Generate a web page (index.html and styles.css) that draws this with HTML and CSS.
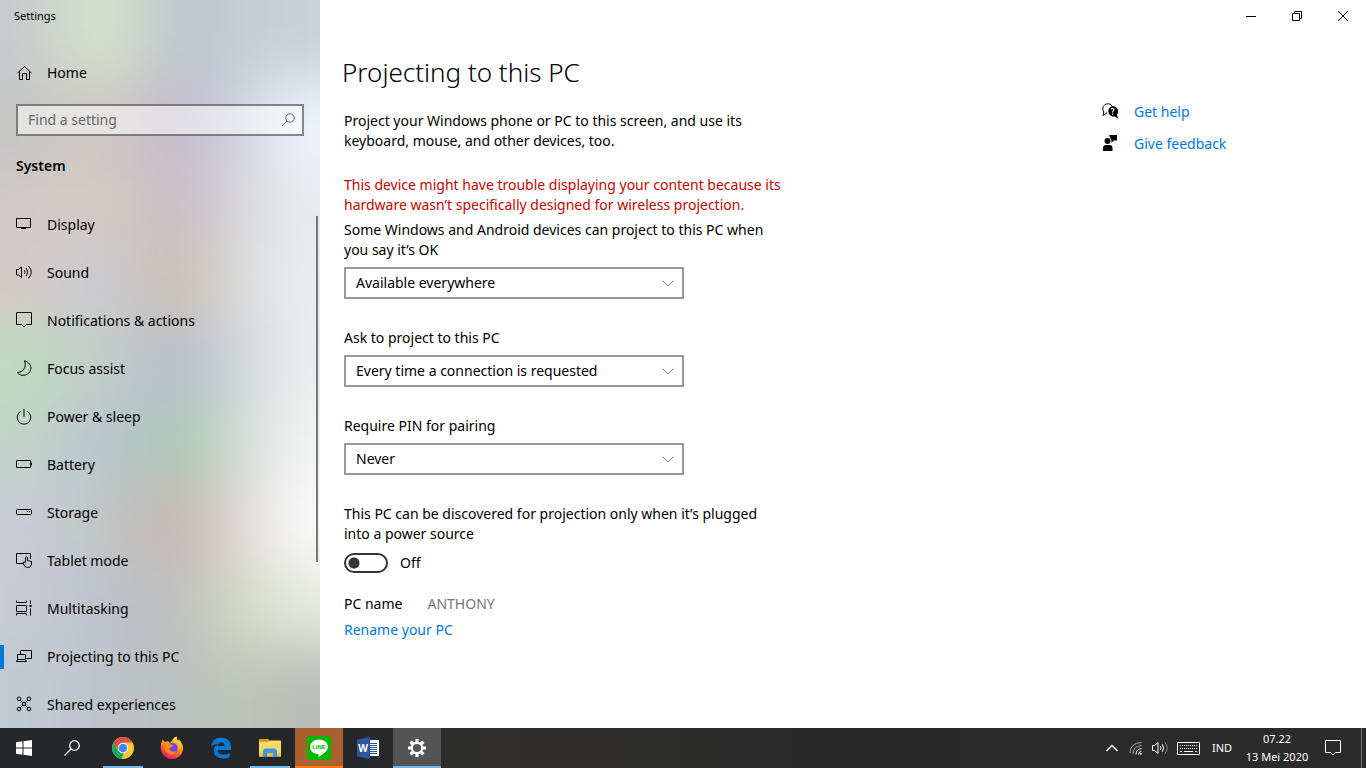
FILE: index.html
```html
<!DOCTYPE html>
<html lang="en">
<head>
<meta charset="utf-8">
<title>Settings</title>
<meta name="viewport" content="width=device-width, initial-scale=1">
<link rel="stylesheet" href="styles.css">
</head>
<body>
<div class="window">
  <aside class="sidebar">
    <div class="acrylic" aria-hidden="true">
      <div class="band band-1"></div>
      <div class="band band-2"></div>
      <div class="band band-3"></div>
      <div class="band band-4"></div>
      <div class="band band-5"></div>
      <div class="band band-6"></div>
      <div class="band band-7"></div>
      <div class="band band-8"></div>
      <div class="band band-9"></div>
    </div>
    <div class="app-title">Settings</div>
    <a class="nav-link home" href="#">
      <svg class="icon" viewBox="0 0 16 16"><path d="M1.500 8 8.500 1.500 15.500 8M3.500 6.500V14.500H6.500V8.500H10.500V14.500H13.500V6.500"/></svg>
      <span>Home</span>
    </a>
    <form class="search">
      <input class="search-input" type="text" placeholder="Find a setting" aria-label="Find a setting">
      <button class="search-button" type="button" aria-label="Search">
        <svg class="icon" viewBox="0 0 16 16"><circle cx="10" cy="6" r="4.200"/><path d="M7 9 2 14"/></svg>
      </button>
    </form>
    <h2 class="section-title">System</h2>
    <nav class="nav">
      <a class="nav-link" href="#"><svg class="icon" viewBox="0 0 16 16"><path d="M.5 1.500H14.500V10.500H.5ZM7.500 10.500V12M5 11.500H10"/></svg><span>Display</span></a>
      <a class="nav-link" href="#"><svg class="icon" viewBox="0 0 16 16"><path d="M.5 4.500H2.500L5.500 2V12.500L2.500 10H.5ZM8.300 5.200Q9.600 7.200 8.300 9.200M10.300 3.200Q13 7.200 10.300 11.200M12.500 1Q18 7.200 12.500 13.400"/></svg><span>Sound</span></a>
      <a class="nav-link" href="#"><svg class="icon raised" viewBox="0 0 16 16"><path d="M.5.5H15.500V12.500H10.500L8 15 5.500 12.500H.5Z"/></svg><span>Notifications &amp; actions</span></a>
      <a class="nav-link" href="#"><svg class="icon raised" viewBox="0 0 16 16"><path d="M8.500.8C13 2 15.500 5.500 14.800 9.200 13.500 15.700 5 17.500 1 12.300 7 12.800 11 7 8.500.8Z"/></svg><span>Focus assist</span></a>
      <a class="nav-link" href="#"><svg class="icon" viewBox="0 0 16 16"><path d="M8 0V8M4.800 2.400A6.800 6.800 0 1 0 11.200 2.400"/></svg><span>Power &amp; sleep</span></a>
      <a class="nav-link" href="#"><svg class="icon raised" viewBox="0 0 16 16"><path d="M.5 4.500H14.500V11.500H.5ZM15.500 6.500V9.500"/></svg><span>Battery</span></a>
      <a class="nav-link" href="#"><svg class="icon raised" viewBox="0 0 16 16"><rect x=".5" y="5.500" width="15" height="5" rx=".7"/><path d="M11 7.500H12M13 7.500H14"/></svg><span>Storage</span></a>
      <a class="nav-link" href="#"><svg class="icon raised" viewBox="0 0 16 16"><path d="M7 11.500H.5V1.500H14.500V7M9.500 10.500V5.500Q10.500 4 11.500 5.500V8.500L15.500 9.500V12.500Q15 15.500 11.500 15.500 9 15.500 8 13L7 10.500Q8 9 9.500 11"/></svg><span>Tablet mode</span></a>
      <a class="nav-link" href="#"><svg class="icon raised" viewBox="0 0 16 16"><path d="M.500.500V2.500H10.500V.500M.500 5.500H10.500V11.500H.500ZM.500 15.500V13.500H10.500V15.500M14.500.500V4M14.500 8.500V15.500"/><path d="M13.500 6H15.500" stroke-width="2"/></svg><span>Multitasking</span></a>
      <a class="nav-link current" href="#" aria-current="page"><svg class="icon raised" viewBox="0 0 16 16"><path d="M4.500 6V2.500H15.500V10.500H10.500M1.500 11.500V6.500H9.500V11.500M.5 13.500 1.500 11.500H9.500L10.500 13.500Z"/></svg><span>Projecting to this PC</span></a>
      <a class="nav-link" href="#"><svg class="icon raised" viewBox="0 0 16 16"><circle cx="3" cy="2.800" r="1.800"/><circle cx="13" cy="2.800" r="1.800"/><circle cx="3" cy="13" r="1.800"/><circle cx="13" cy="13" r="1.800"/><path d="M4.300 4.100 6.500 6.500M11.700 4.100 9.500 6.500M4.300 11.700 6.500 9.500M11.700 11.700 9.500 9.500M6.500 6.500H9.500V9.500H6.500Z"/></svg><span>Shared experiences</span></a>
    </nav>
    <div class="scroll-thumb"></div>
  </aside>

  <div class="pane">
    <div class="caption-bar">
      <button class="caption" type="button" aria-label="Minimize"><svg viewBox="0 0 10 10"><path d="M0 5.500H10"/></svg></button>
      <button class="caption" type="button" aria-label="Restore"><svg viewBox="0 0 10 10"><path d="M.5 2.500H7.500V9.500H.5ZM2.500 2.500V.5H9.500V7.500H7.500"/></svg></button>
      <button class="caption" type="button" aria-label="Close"><svg viewBox="0 0 10 10"><path d="M0 0 10 10M10 0 0 10"/></svg></button>
    </div>
    <div class="columns">
      <main class="content">
        <h1 class="page-title">Projecting to this PC</h1>
        <p class="intro">Project your Windows phone or PC to this screen, and use its<br>keyboard, mouse, and other devices, too.</p>
        <p class="warning">This device might have trouble displaying your content because its<br>hardware wasn’t specifically designed for wireless projection.</p>
        <div class="field">
          <label for="availability">Some Windows and Android devices can project to this PC when<br>you say it’s OK</label>
          <div class="combo">
            <select id="availability"><option>Available everywhere</option></select>
            <svg class="chevron" viewBox="0 0 12 7"><path d="M.5.500 6 6 11.500.500"/></svg>
          </div>
        </div>
        <div class="field">
          <label for="ask">Ask to project to this PC</label>
          <div class="combo">
            <select id="ask"><option>Every time a connection is requested</option></select>
            <svg class="chevron" viewBox="0 0 12 7"><path d="M.5.500 6 6 11.500.500"/></svg>
          </div>
        </div>
        <div class="field">
          <label for="pin">Require PIN for pairing</label>
          <div class="combo">
            <select id="pin"><option>Never</option></select>
            <svg class="chevron" viewBox="0 0 12 7"><path d="M.5.500 6 6 11.500.500"/></svg>
          </div>
        </div>
        <div class="power">
          <label for="plugged">This PC can be discovered for projection only when it’s plugged<br>into a power source</label>
          <div class="switch-row">
            <input class="switch" id="plugged" type="checkbox" role="switch">
            <span>Off</span>
          </div>
        </div>
        <dl class="device"><dt>PC name</dt><dd>ANTHONY</dd></dl>
        <a class="link" href="#">Rename your PC</a>
      </main>
      <aside class="help">
        <a class="link help-link" href="#"><svg class="help-icon" viewBox="0 0 16 16"><path d="M5 9.800 1 12.500 1.800 9A5 5 0 1 1 10 2.800" fill="none" stroke="#000"/><path d="M10.500 3A5.300 5.300 0 1 0 12.700 13.400L16 15.500 15 11.500A5.300 5.300 0 0 0 10.500 3Z"/><path d="M9 6.500Q9.500 5.300 10.700 5.500 12.700 6 11.500 7.600 10.600 8.300 10.600 9.500M10.600 10.600V11.800" fill="none" stroke="#fff" stroke-width="1.200"/></svg><span>Get help</span></a>
        <a class="link help-link" href="#"><svg class="help-icon" viewBox="0 0 16 16"><circle cx="5.500" cy="6" r="3"/><path d="M1 16V13Q1 10 4 10H7.500Q10.500 10 10.500 13V16ZM7 0H15V5.500H12L9.500 7.700V5.500Z"/></svg><span>Give feedback</span></a>
      </aside>
    </div>
  </div>
</div>

<footer class="taskbar">
  <div class="launch">
    <button class="task" type="button" aria-label="Start"><svg width="16" height="16" viewBox="0 0 16 16" fill="#fff"><path d="M0 2.200 6.500 1.300V7.500H0ZM7.500 1.200 16 0V7.500H7.500ZM0 8.500H6.500V14.700L0 13.800ZM7.500 8.500H16V16L7.500 14.800Z"/></svg></button>
    <button class="task" type="button" aria-label="Search"><svg width="16" height="16" viewBox="0 0 16 16" fill="none" stroke="#fff" stroke-width="1.300"><circle cx="10.500" cy="5.500" r="4.800"/><path d="M7 9 .5 15.500"/></svg></button>
  </div>
  <div class="apps">
    <button class="task running" type="button" aria-label="Chrome">
      <svg width="22" height="22" viewBox="0 0 22 22"><circle cx="11" cy="11" r="11" fill="#fcc934"/><path d="M1.500 5.500A11 11 0 0 1 20.500 5.500H11L6.200 13.800Z" fill="#d94f43"/><path d="M1.500 5.500 6.200 13.700Q8.500 16.500 12 16L9.500 21.900A11 11 0 0 1 1.500 5.500Z" fill="#1da462"/><circle cx="11" cy="11" r="5.300" fill="#fff"/><circle cx="11" cy="11" r="4.300" fill="#4688f1"/></svg>
    </button>
    <button class="task" type="button" aria-label="Firefox">
      <svg width="24" height="24" viewBox="0 0 24 24"><defs><linearGradient id="fire" x1=".8" y1="0" x2=".3" y2="1"><stop offset="0" stop-color="#fff44f"/><stop offset=".45" stop-color="#ff980e"/><stop offset=".8" stop-color="#ff3750"/><stop offset="1" stop-color="#e31587"/></linearGradient></defs><path d="M2.500 3.500 5 6 8 5 10 7 12.500 4 14 1.500 17 .5Q16 3 18 4.500L19 3.500Q24 9 23 14A11.200 11.200 0 0 1 1 14Q0 9 2.500 3.500Z" fill="url(#fire)"/><circle cx="12.500" cy="12" r="5.300" fill="#7542e5"/><path d="M4 9Q8 5.500 11 8.500L13.500 9.500 10.500 11.500Q8.500 12.500 10.500 15 13 16.500 16 15 12 21 7 17 4 14 4 9Z" fill="#ff8a16"/><path d="M14.500 6Q19.500 8.500 17.500 14 22 10 18 5L16.500 2Z" fill="#ffbd2e"/></svg>
    </button>
    <button class="task" type="button" aria-label="Edge">
      <svg width="20" height="22" viewBox="0 0 20 22"><path d="M0 9.600Q1.500.600 10.500.600 19.800 1 20 10V13H6.500Q7 17.500 12.500 17.700 16 17.600 18.700 16V20Q15.500 21.700 12 21.600 2.500 21 2.800 13 3.100 9 7.500 6.800 3 7 0 9.600ZM6.500 9H13.700Q13.500 5.600 10.300 5.600 7.200 6 6.500 9Z" fill="#0078d7" fill-rule="evenodd"/></svg>
    </button>
    <button class="task running" type="button" aria-label="File Explorer">
      <svg width="22" height="18" viewBox="0 0 22 18"><path d="M0 0H9L10 1.500H22V17.500H0Z" fill="#ffd76a"/><path d="M0 0H9L10 1.500 9 3H0Z" fill="#dc9a19"/><path d="M0 14H22V17.500H0Z" fill="#f6bd45"/><path d="M4 18V11L6 9.500H16L18 11V18H14V14H8V18Z" fill="#3b9ade"/></svg>
    </button>
    <button class="task attention" type="button" aria-label="LINE">
      <svg width="24" height="24" viewBox="0 0 24 24"><rect width="24" height="24" rx="3" fill="#00b900"/><path d="M12 3.500C17 3.500 21 6.800 21 11 21 15 15 19 11.500 21V18.200C6.500 18 3 15 3 11 3 6.800 7 3.500 12 3.500Z" fill="#fff"/><text class="line-mark" x="12" y="13">LINE</text></svg>
    </button>
    <button class="task" type="button" aria-label="Word">
      <svg width="22" height="22" viewBox="0 0 22 22"><path d="M11 3H22V19H11Z" fill="#fff"/><path d="M13 6.500H20M13 8.500H20M13 10.500H20M13 12.500H20M13 14.500H20M13 16.500H20" stroke="#2b579a"/><path d="M0 2.500 13 0V22L0 19.500Z" fill="#2b579a"/><text class="word-mark" x="6" y="15">W</text></svg>
    </button>
    <button class="task running active" type="button" aria-label="Settings">
      <svg width="18" height="18" viewBox="0 0 18 18" fill="none" stroke="#fff"><circle cx="9" cy="9" r="5.200" stroke-width="2.200"/><path d="M9 0V3.500M9 14.500V18M0 9H3.500M14.500 9H18M2.600 2.600 5 5M13 13 15.400 15.400M2.600 15.400 5 13M13 5 15.400 2.600" stroke-width="3.200"/></svg>
    </button>
  </div>
  <div class="tray">
    <button class="tray-item" type="button" aria-label="Show hidden icons"><svg width="12" height="8" viewBox="0 0 12 8"><path d="M.5 7 6 1.500 11.500 7" stroke-width="1.400"/></svg></button>
    <button class="tray-item" type="button" aria-label="Network"><svg width="14" height="14" viewBox="0 0 14 14"><g stroke="#aaa"><path d="M1 12Q1 2 12.500 1.500M4 13Q4 5 12.500 4.500"/></g><path d="M7 13.500Q7 8 12.500 7.500M9.500 13.500Q10 10.500 12.500 10.200"/><circle cx="11.800" cy="12.800" r=".6"/></svg></button>
    <button class="tray-item" type="button" aria-label="Volume"><svg width="16" height="14" viewBox="0 0 16 14"><path d="M.5 4.500H2.500L6 1.500V12.500L2.500 9.500H.5ZM8.300 5Q9.600 7 8.300 9M10.300 3.200Q13 7 10.300 10.800"/><path d="M12.500 1Q18 7 12.500 13" stroke="#888"/></svg></button>
    <button class="tray-item keyboard" type="button" aria-label="Touch keyboard"><svg width="23" height="13" viewBox="0 0 23 13"><path d="M.5.500H22.500V12.500H.500Z"/><path d="M3 3.500H21M3 6.500H21" stroke-dasharray="1 1"/><path d="M3 9.500H5M7 9.500H16M18 9.500H20"/></svg></button>
    <button class="tray-item lang" type="button">IND</button>
    <button class="tray-item clock" type="button"><span>07.22</span><span>13 Mei 2020</span></button>
    <button class="tray-item action" type="button" aria-label="Action center"><svg width="16" height="16" viewBox="0 0 16 16"><path d="M.5.500H15.500V12.500H10.500L8 15 5.500 12.500H.5Z"/></svg></button>
    <button class="show-desktop" type="button" aria-label="Show desktop"></button>
  </div>
</footer>
</body>
</html>
```
FILE: styles.css
```css
* { box-sizing: border-box; }

body {
  margin: 0;
  height: 100vh;
  display: flex;
  flex-direction: column;
  overflow: hidden;
  background: #fff;
  color: #000;
  font: 14px/20px "Noto Sans", "Open Sans", sans-serif;
}

button, input, select { font: inherit; color: inherit; }
button { border: 0; padding: 0; background: none; }
h1, h2, p, dl, dd { margin: 0; }
a { text-decoration: none; }
svg { display: block; flex: none; }

.window { flex: 1; min-height: 0; display: flex; }

/* Sidebar */
.sidebar {
  position: relative;
  isolation: isolate;
  flex: none;
  width: 320px;
  display: flex;
  flex-direction: column;
  overflow: hidden;
}

/* Translucent backdrop: colour bands blurred together, bleeding past the edges */
.acrylic {
  position: absolute;
  inset: -80px;
  z-index: -1;
  display: flex;
  flex-direction: column;
  filter: blur(28px);
}
.band { flex: 81; background: linear-gradient(90deg, var(--a) 100px, var(--b) 184px, var(--c) 264px, var(--d) 316px, var(--e) 376px); }
.band-1 { flex: 161; --a: #c7cacf; --b: #d8e6c8; --c: #bcc2cf; --d: #c3ced6; --e: #c8d3d5; }
.band-2 { --a: #c4c5c4; --b: #d0c9c5; --c: #c0b8cb; --d: #ced2de; --e: #f0f4fc; }
.band-3 { --a: #cfc9c9; --b: #d6cbc2; --c: #c7bac5; --d: #d6d6da; --e: #e9ecef; }
.band-4 { --a: #d8c9c7; --b: #c8ccd4; --c: #cbbcac; --d: #d8dadb; --e: #eaeef0; }
.band-5 { --a: #bcdebf; --b: #c5ccc9; --c: #b3bccd; --d: #d0d5d8; --e: #ecedee; }
.band-6 { --a: #c2d5c9; --b: #b9c3cf; --c: #a8cab0; --d: #d0d8d2; --e: #f3f4f4; }
.band-7 { --a: #cacad8; --b: #bfc8c4; --c: #c9b1b0; --d: #ddd7d6; --e: #fafafa; }
.band-8 { --a: #c8cbd5; --b: #bcc2cb; --c: #bebfbf; --d: #d0dabd; --e: #e6e9e0; }
.band-9 { flex: 161; --a: #c0cbd4; --b: #bfc3c9; --c: #b8bfbf; --d: #c0c8b8; --e: #b8bdb8; }

.app-title {
  height: 32px;
  padding-left: 14px;
  font-size: 11px;
  line-height: 32px;
}

.nav-link {
  flex: none;
  display: flex;
  align-items: center;
  gap: 15px;
  height: 48px;
  padding-left: 16px;
  color: #000;
}
.home { margin-top: 17px; }
.icon { width: 16px; height: 16px; fill: none; stroke: currentColor; }
.raised { margin-bottom: 2px; }

.search {
  display: flex;
  height: 32px;
  margin: 7px 16px 0;
  border: 2px solid rgba(0, 0, 0, .45);
  background: rgba(255, 255, 255, .5);
  color: #666;
}
.search-input {
  flex: 1;
  min-width: 0;
  padding: 0 10px;
  border: 0;
  outline: 0;
  background: none;
}
.search-input::placeholder { color: #666; opacity: 1; }
.search-button { width: 24px; padding-left: 2px; }

.section-title {
  margin: 20px 16px 25px;
  font-size: 14px;
  line-height: 20px;
  font-weight: 600;
}

.nav { flex: 1; min-height: 0; overflow: hidden; }
.current { background: linear-gradient(#0078d7, #0078d7) left center / 4px 24px no-repeat; }

.scroll-thumb {
  position: absolute;
  right: 2px;
  top: 216px;
  width: 2px;
  height: 346px;
  background: #777;
}

/* Main pane */
.pane { flex: 1; min-width: 0; }
.caption-bar { display: flex; justify-content: flex-end; height: 32px; }
.caption { display: grid; place-items: center; width: 46px; }
.caption svg { width: 10px; height: 10px; fill: none; stroke: #000; }

.columns { display: grid; grid-template-columns: minmax(0, 1fr) 264px; }
.content { padding: 20px 0 0 24px; }
.page-title {
  margin: 0 0 19px -2px;
  font-size: 26px;
  line-height: 40px;
  font-weight: 300;
}
.intro { margin-bottom: 24px; }
.warning { margin-bottom: 5px; color: #c50500; }

.field { margin-bottom: 29px; }
.field label, .power label { display: block; }
.combo {
  display: grid;
  align-items: center;
  width: 340px;
  max-width: 100%;
  margin-top: 7px;
}
.combo select {
  grid-area: 1 / 1;
  width: 100%;
  height: 32px;
  padding: 0 32px 0 10px;
  border: 2px solid #999;
  border-radius: 0;
  background: #fff;
  appearance: none;
}
.chevron {
  grid-area: 1 / 1;
  justify-self: end;
  width: 12px;
  height: 7px;
  margin-right: 10px;
  fill: none;
  stroke: #777;
  pointer-events: none;
}

.switch-row { display: flex; align-items: center; gap: 12px; margin-top: 9px; }
.switch {
  appearance: none;
  width: 44px;
  height: 20px;
  margin: 0;
  border: 2px solid #333;
  border-radius: 10px;
  background: radial-gradient(circle at 8px 8px, #333 5px, transparent 6px);
}

.device { display: flex; gap: 25px; margin: 21px 0 6px; }
.device dd { color: #767676; }
.link { color: #0078d7; }

.help { padding-top: 64px; }
.help-link { display: flex; align-items: center; gap: 16px; height: 32px; }
.help-icon { width: 16px; height: 16px; margin-bottom: 2px; fill: #000; }

/* Taskbar */
.taskbar {
  flex: none;
  display: flex;
  height: 40px;
  background: linear-gradient(90deg, #25272a, #242628 25%, #302f2d 36%, #292929 60%, #2b2b2b);
  color: #fff;
}
.launch { display: flex; margin-right: 3px; }
.apps { display: flex; gap: 1px; }
.task { display: grid; place-items: center; width: 48px; height: 40px; }
.running { background: linear-gradient(#76b9ed, #76b9ed) center bottom / 40px 2px no-repeat; }
.attention { background: #a9622d; border-bottom: 2px solid #ff7b00; padding-top: 2px; }
.active { background-color: #555; background-size: 48px 2px; }
.line-mark { font: bold 6px "Liberation Sans", sans-serif; fill: #00b900; text-anchor: middle; }
.word-mark { font: bold 10px "Open Sans", sans-serif; fill: #fff; text-anchor: middle; }

.tray { display: flex; margin-left: auto; font-size: 11px; line-height: 18px; }
.tray-item { display: grid; place-items: center; width: 24px; }
.tray-item svg { fill: none; stroke: #fff; }
.keyboard { width: 32px; }
.lang { width: 36px; }
.clock { width: 74px; align-content: center; }
.action { width: 38px; }
.show-desktop { width: 5px; margin-left: 9px; border-left: 1px solid #777; }
```
